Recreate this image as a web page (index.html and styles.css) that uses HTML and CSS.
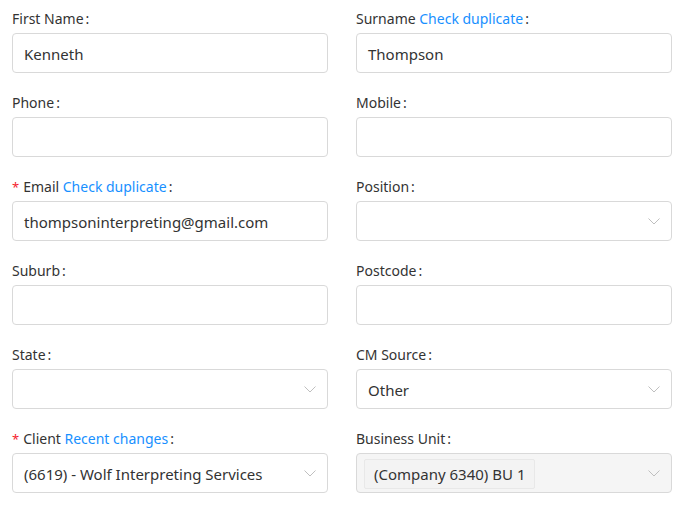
FILE: index.html
```html
<!DOCTYPE html>
<html>
<head>
<meta charset="utf-8">
<link rel="stylesheet" href="styles.css">
</head>
<body>
<div class="form">
  <div class="field">
    <div class="label">First Name<span class="colon">:</span></div>
    <div class="input">Kenneth</div>
  </div>
  <div class="field">
    <div class="label">Surname <a class="link">Check duplicate</a><span class="colon">:</span></div>
    <div class="input">Thompson</div>
  </div>
  <div class="field">
    <div class="label">Phone<span class="colon">:</span></div>
    <div class="input"></div>
  </div>
  <div class="field">
    <div class="label">Mobile<span class="colon">:</span></div>
    <div class="input"></div>
  </div>
  <div class="field">
    <div class="label"><span class="req">*</span>Email <a class="link">Check duplicate</a><span class="colon">:</span></div>
    <div class="input">thompsoninterpreting@gmail.com</div>
  </div>
  <div class="field">
    <div class="label">Position<span class="colon">:</span></div>
    <div class="input select"><span class="value"></span><svg class="arrow" width="12" height="7" viewBox="0 0 12 7"><polyline points="0.5,0.5 6,6 11.5,0.5" fill="none" stroke="#bfbfbf" stroke-width="1"/></svg></div>
  </div>
  <div class="field">
    <div class="label">Suburb<span class="colon">:</span></div>
    <div class="input"></div>
  </div>
  <div class="field">
    <div class="label">Postcode<span class="colon">:</span></div>
    <div class="input"></div>
  </div>
  <div class="field">
    <div class="label">State<span class="colon">:</span></div>
    <div class="input select"><span class="value"></span><svg class="arrow" width="12" height="7" viewBox="0 0 12 7"><polyline points="0.5,0.5 6,6 11.5,0.5" fill="none" stroke="#bfbfbf" stroke-width="1"/></svg></div>
  </div>
  <div class="field">
    <div class="label">CM Source<span class="colon">:</span></div>
    <div class="input select"><span class="value">Other</span><svg class="arrow" width="12" height="7" viewBox="0 0 12 7"><polyline points="0.5,0.5 6,6 11.5,0.5" fill="none" stroke="#bfbfbf" stroke-width="1"/></svg></div>
  </div>
  <div class="field">
    <div class="label"><span class="req">*</span>Client <a class="link">Recent changes</a><span class="colon">:</span></div>
    <div class="input select"><span class="value">(6619) - Wolf Interpreting Services</span><svg class="arrow" width="12" height="7" viewBox="0 0 12 7"><polyline points="0.5,0.5 6,6 11.5,0.5" fill="none" stroke="#bfbfbf" stroke-width="1"/></svg></div>
  </div>
  <div class="field">
    <div class="label">Business Unit<span class="colon">:</span></div>
    <div class="input select disabled"><span class="tag">(Company 6340) BU 1</span><svg class="arrow" width="12" height="7" viewBox="0 0 12 7"><polyline points="0.5,0.5 6,6 11.5,0.5" fill="none" stroke="#bfbfbf" stroke-width="1"/></svg></div>
  </div>
</div>
</body>
</html>
```
FILE: styles.css
```css
html, body {
  margin: 0;
  padding: 0;
  background: #fff;
}
body {
  font-family: "Noto Sans", "Open Sans", sans-serif;
  color: #333;
}
.form {
  display: grid;
  grid-template-columns: 316px 316px;
  column-gap: 28px;
  padding: 7px 13px 0 12px;
}
.field {
  margin-bottom: 18px;
}
.label {
  box-sizing: border-box;
  font-size: 14px;
  line-height: 22px;
  height: 22px;
  padding-top: 1px;
  margin-bottom: 4px;
  color: #333;
  white-space: nowrap;
}
.colon {
  margin-left: 2px;
}
.req {
  color: #f5222d;
  margin-right: 4px;
  font-size: 13px;
}
.link {
  color: #1890ff;
  text-decoration: none;
}
.input {
  box-sizing: border-box;
  height: 40px;
  border: 1px solid #d9d9d9;
  border-radius: 4px;
  padding: 2px 11px 0;
  font-size: 15px;
  line-height: 36px;
  color: #333;
  display: flex;
  align-items: center;
}
.select {
  justify-content: space-between;
}
.select .arrow {
  flex: none;
  margin-top: -2px;
}
.disabled {
  background: #f5f5f5;
  padding-left: 7px;
}
.tag {
  box-sizing: border-box;
  height: 30px;
  line-height: 28px;
  border: 1px solid #e8e8e8;
  background: #f3f3f3;
  border-radius: 2px;
  padding: 0 9px;
  margin-top: -1px;
}
```
